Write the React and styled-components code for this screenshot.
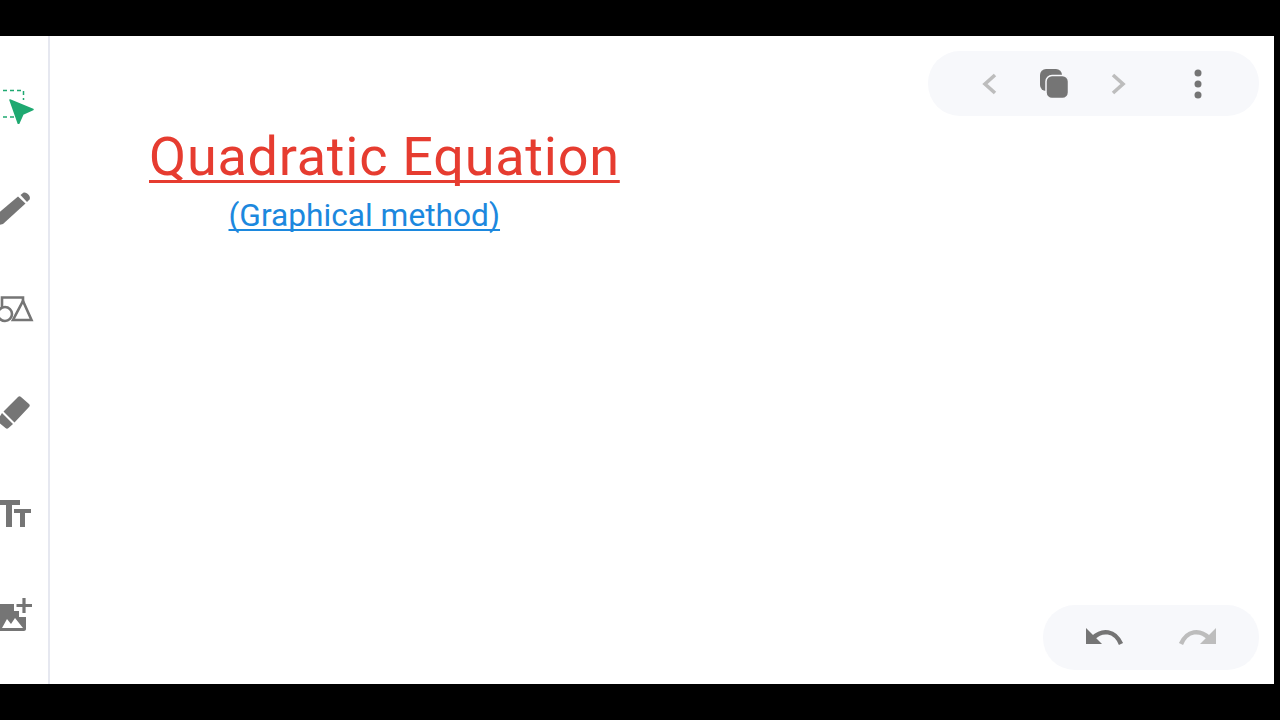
import React from 'react';
import styled, { createGlobalStyle } from 'styled-components';

const Global = createGlobalStyle`
  html, body { margin: 0; height: 100%; background: #000; }
  #root { height: 100%; }
`;

const Page = styled.div`
  height: 720px;
  width: 1280px;
  padding: 36px 6px 36px 0;
  box-sizing: border-box;
  background: #000;
  overflow: hidden;
`;

const Sheet = styled.main`
  display: flex;
  height: 100%;
  background: #fff;
`;

const Rail = styled.nav`
  flex: none;
  width: 48px;
  padding-top: 19px;
  border-right: 2px solid #e6e8f0;
  overflow: hidden;
`;

const RailItem = styled.div`
  display: flex;
  align-items: center;
  height: 102px;
  svg { display: block; margin-left: -2px; flex: none; }
`;

const Canvas = styled.section`
  position: relative;
  flex: 1;
  padding: 87px 0 0 99px;
  font-family: Roboto, "Liberation Sans", sans-serif;
`;

const Title = styled.h1`
  display: table;
  margin: 0;
  font-size: 54px;
  line-height: 68px;
  font-weight: 400;
  letter-spacing: 0.75px;
  color: #e63c30;
  text-decoration: underline;
  text-decoration-thickness: 2.5px;
  text-decoration-skip-ink: none;
  text-underline-offset: 5px;
`;

const Subtitle = styled.h2`
  display: table;
  margin: 3px 0 0 79.5px;
  font-size: 31.7px;
  line-height: 44px;
  font-weight: 400;
  color: #1c88de;
  text-decoration: underline;
  text-decoration-thickness: 2px;
  text-decoration-skip-ink: none;
  text-underline-offset: 3px;
`;

const Pill = styled.div`
  position: absolute;
  right: 15px;
  display: flex;
  align-items: center;
  justify-content: space-between;
  box-sizing: border-box;
  padding: 0 28.500px;
  background: #f7f8fb;
  border-radius: 32px;
  width: ${p => p.$w}px;
  height: 65px;
  ${p => p.$bottom ? 'bottom: 14px;' : 'top: 15px;'}
`;

const Group = styled.div`
  display: flex;
`;

const Tool = styled.button`
  display: flex;
  align-items: center;
  justify-content: center;
  width: 65px;
  height: 48px;
  padding: 0;
  border: 0;
  background: none;
  svg { display: block; }
`;

const GRAY = '#757575';
const LIGHT = '#bdbdbd';
const GREEN = '#1fa971';

const RailIcon = ({ children }) => (
  <svg width="36" height="36" viewBox="-2 -18 36 36">{children}</svg>
);

const Chevron = ({ flip }) => (
  <svg width="20" height="24" viewBox="0 0 20 24">
    <path d={flip ? 'M4 3l10 9-10 9' : 'M16 3L6 12l10 9'} fill="none" stroke={LIGHT} strokeWidth="3.6" />
  </svg>
);

const Undo = ({ flip, color }) => (
  <svg width="40" height="24" viewBox="0 0 40 24" style={flip ? { transform: 'scaleX(-1)' } : undefined}>
    <path d="M2 2v16h16z" fill={color} />
    <path d="M9 12C18 3 31 4 37 18" fill="none" stroke={color} strokeWidth="4.5" />
  </svg>
);

export default function App() {
  return (
    <Page>
      <Global />
      <Sheet>
        <Rail>
          <RailItem>
            <RailIcon>
              <path d="M3-15.500H23.500V-6M3 11H15" fill="none" stroke={GREEN} strokeWidth="1.500" strokeDasharray="4 3" />
              <path d="M10-6L33 3.500 23 8 18.500 18z" fill={GREEN} stroke={GREEN} strokeWidth="1.500" strokeLinejoin="round" />
            </RailIcon>
          </RailItem>
          <RailItem>
            <RailIcon>
              <path d="M-4 7L18-11.500 25.500-4.500 3 16-4 18z" fill={GRAY} />
              <path d="M20.500-13L23-15C26-17 31.500-11.500 29.500-8.500L27-6z" fill={GRAY} />
            </RailIcon>
          </RailItem>
          <RailItem>
            <RailIcon>
              <g fill="none" stroke={GRAY} strokeWidth="2.600">
                <path d="M2-3V-12.500H23V-8" />
                <circle cx="5" cy="4" r="7" />
                <path d="M23-9L31.500 10H13z" />
              </g>
            </RailIcon>
          </RailItem>
          <RailItem>
            <RailIcon>
              <path d="M18-15C19-16 20-16 21-15L29-8C30-7 30-6 29-5L14.500 10.500 3.500-0.500z" fill={GRAY} />
              <path d="M2 1L13 12 8.500 16C7.500 17 6.500 17 5.500 16L-3 9z" fill={GRAY} />
            </RailIcon>
          </RailItem>
          <RailItem>
            <RailIcon>
              <path d="M-2-14H20V-9H12V13H6V-9H-2z" fill={GRAY} />
              <path d="M14-5H31V-1H25V13H20V-1H14z" fill={GRAY} />
            </RailIcon>
          </RailItem>
          <RailItem>
            <RailIcon>
              <path d="M-2-12H14V-5H19V1H26V13C26 14 25 15 24 15H-2z" fill={GRAY} />
              <path d="M2 12L7 3 11 8 15 2 23 12z" fill="#fff" />
              <path d="M24-18V-3M16.500-10.500H32" fill="none" stroke={GRAY} strokeWidth="3.200" />
            </RailIcon>
          </RailItem>
        </Rail>
        <Canvas>
          <Title>Quadratic Equation</Title>
          <Subtitle>(Graphical method)</Subtitle>
          <Pill $w={331}>
            <Group>
              <Tool aria-label="Previous"><Chevron /></Tool>
              <Tool aria-label="Pages">
                <svg width="32" height="32" viewBox="0 0 32 32">
                  <rect x="2" y="1" width="22" height="22" rx="6" fill={GRAY} />
                  <rect x="8" y="7.500" width="22.500" height="23" rx="6" fill={GRAY} stroke="#f7f8fb" strokeWidth="1.500" />
                </svg>
              </Tool>
              <Tool aria-label="Next"><Chevron flip /></Tool>
            </Group>
            <Tool aria-label="More">
              <svg width="8" height="30" viewBox="0 0 8 30">
                <circle cx="4" cy="4" r="3.500" fill={GRAY} />
                <circle cx="4" cy="15" r="3.500" fill={GRAY} />
                <circle cx="4" cy="26" r="3.500" fill={GRAY} />
              </svg>
            </Tool>
          </Pill>
          <Pill $w={216} $bottom>
            <Tool aria-label="Undo"><Undo color={GRAY} /></Tool>
            <Tool aria-label="Redo"><Undo flip color={LIGHT} /></Tool>
          </Pill>
        </Canvas>
      </Sheet>
    </Page>
  );
}
